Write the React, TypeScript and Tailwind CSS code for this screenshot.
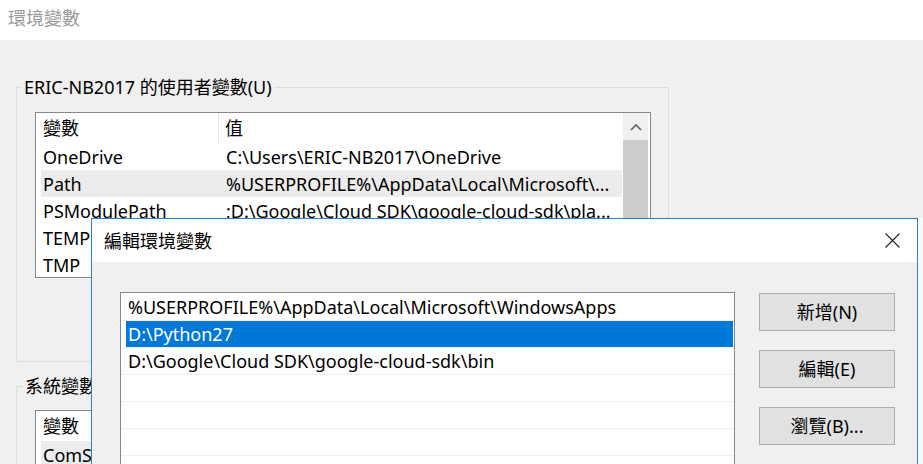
const USER_VARS = [
  { name: 'OneDrive', value: 'C:\\Users\\ERIC-NB2017\\OneDrive' },
  { name: 'Path', value: '%USERPROFILE%\\AppData\\Local\\Microsoft\\...', hover: true },
  { name: 'PSModulePath', value: ';D:\\Google\\Cloud SDK\\google-cloud-sdk\\pla...' },
  { name: 'TEMP', value: '%USERPROFILE%\\AppData\\Local\\Temp' },
  { name: 'TMP', value: '%USERPROFILE%\\AppData\\Local\\Temp' },
]

const SYS_VARS = [{ name: 'ComSpec', value: 'C:\\WINDOWS\\system32\\cmd.exe', hover: true }]

const PATHS = [
  '%USERPROFILE%\\AppData\\Local\\Microsoft\\WindowsApps',
  'D:\\Python27',
  'D:\\Google\\Cloud SDK\\google-cloud-sdk\\bin',
  '',
  '',
  '',
  '',
]

type Row = { name: string; value: string; hover?: boolean }

function VarList({ rows }: { rows: Row[] }) {
  return (
    <div className="ml-[18px] w-[616px] h-[166px] border border-[#828790] bg-white flex overflow-hidden">
      <div className="flex-1 min-w-0 flex flex-col">
        {/* Header */}
        <div className="h-[30px] shrink-0 flex">
          <div className="w-[183px] h-full pl-[7px] flex items-center border-r border-[#e5e5e5]">變數</div>
          <div className="pl-[6px] flex items-center">值</div>
        </div>
        {rows.map((r) => (
          <div
            key={r.name}
            className={`h-[27px] shrink-0 ml-[5px] mr-[1px] flex items-center whitespace-nowrap overflow-hidden ${r.hover ? 'bg-[#ececec]' : ''}`}
          >
            <div className="w-[183px] shrink-0 pl-[2px]">{r.name}</div>
            <div className="pl-[2px]">{r.value}</div>
          </div>
        ))}
      </div>
      {/* Scrollbar */}
      <div className="w-[25px] mr-[2px] shrink-0 flex flex-col">
        <div className="h-[27px] bg-[#f0f0f0] flex items-center justify-center">
          <svg width="12" height="8" viewBox="0 0 12 8" fill="none">
            <polyline points="1,7 6,2 11,7" stroke="#606060" strokeWidth="1.6" />
          </svg>
        </div>
        <div className="flex-1 bg-[#cdcdcd]" />
      </div>
    </div>
  )
}

export default function App() {
  return (
    <div className="relative w-[923px] h-[464px] overflow-hidden bg-[#f0f0f0] text-[18px] leading-[22px] text-black font-['Noto_Sans','Noto_Sans_CJK_TC',sans-serif]">
      {/* Back window title bar */}
      <div className="h-[40px] bg-white flex items-center pl-[8px] pb-[4px] text-[#9a9a9a]">環境變數</div>

      {/* Back window body */}
      <div className="pl-[16px]">
        <div className="relative mt-[47px] w-[653px] h-[275px] border border-[#dcdcdc]">
          <div className="absolute left-[5px] top-[-12px] px-[2px] bg-[#f0f0f0]">ERIC-NB2017 的使用者變數(U)</div>
          <div className="pt-[24px]">
            <VarList rows={USER_VARS} />
          </div>
        </div>

        <div className="relative mt-[24px] w-[653px] h-[200px] border border-[#dcdcdc]">
          <div className="absolute left-[6px] top-[-12px] px-[2px] bg-[#f0f0f0]">系統變數(S)</div>
          <div className="pt-[23px]">
            <VarList rows={SYS_VARS} />
          </div>
        </div>
      </div>

      {/* Edit dialog */}
      <div className="absolute left-[91px] top-[218px] w-[827px] h-[260px] border border-[#2d7fcf] bg-[#f0f0f0] shadow-[5px_0_0_0_#fafafa]">
        <div className="h-[43px] bg-white flex items-center justify-between pl-[12px] pr-[17px]">
          <span>編輯環境變數</span>
          <svg width="15" height="15" viewBox="0 0 15 15" fill="none">
            <path d="M0.5 0.5L14.5 14.5M14.5 0.5L0.5 14.5" stroke="#222" strokeWidth="1.1" />
          </svg>
        </div>
        <div className="flex pl-[28px] pt-[30px]">
          <div className="w-[615px] h-[200px] border border-[#828790] bg-white pt-[1px]">
            {PATHS.map((p, i) => (
              <div key={i} className="h-[27px] border-b border-[#f0f0f0]">
                <div
                  className={`h-full ml-[5px] mr-[1px] pl-[2px] flex items-center whitespace-nowrap ${i === 1 ? 'bg-[#0078d7] text-white' : ''}`}
                >
                  {p}
                </div>
              </div>
            ))}
          </div>
          <div className="ml-[24px] pt-[1px] flex flex-col gap-[19px]">
            {['新增(N)', '編輯(E)', '瀏覽(B)...'].map((b) => (
              <button
                key={b}
                className="w-[136px] h-[38px] bg-[#e1e1e1] border border-[#adadad] flex items-center justify-center"
              >
                {b}
              </button>
            ))}
          </div>
        </div>
      </div>
    </div>
  )
}
